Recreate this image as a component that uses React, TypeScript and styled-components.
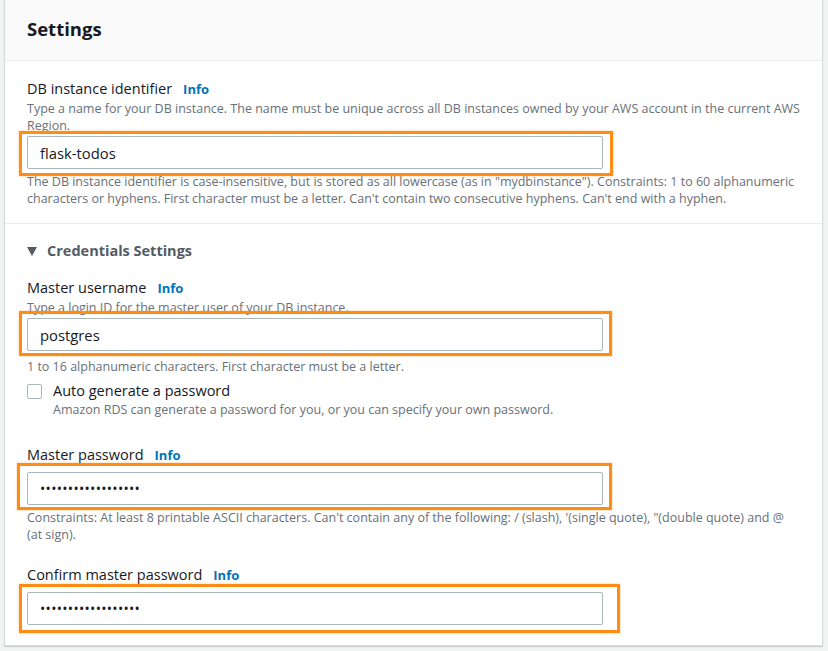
import React from "react";
import styled, { createGlobalStyle } from "styled-components";

const Global = createGlobalStyle`
  html, body { margin: 0; padding: 0; background: #f2f3f3; }
  body { font-family: "Open Sans", Roboto, Arial, sans-serif; color: #16191f; }
  * { box-sizing: border-box; }
`;

const Page = styled.div`
  width: 828px;
  height: 651px;
  overflow: hidden;
  padding: 0 5px 0 4px;
`;

const Card = styled.section`
  margin-top: -3px;
  background: #fff;
  border: 1px solid #d5dbdb;
  box-shadow: 0 1px 1px rgba(0, 22, 40, 0.15);
`;

const Header = styled.header`
  height: 63px;
  padding: 15px 22px 0;
  background: #fafafa;
  border-bottom: 1px solid #eaeded;
`;

const Title = styled.h2`
  margin: 0;
  padding-top: 3px;
  font-size: 18.5px;
  line-height: 26px;
  font-weight: 700;
  color: #16191f;
`;

const Section = styled.div<{ $top: number; $bottom: number; $divider?: boolean }>`
  padding: ${(p) => p.$top}px 22px ${(p) => p.$bottom}px;
  border-bottom: ${(p) => (p.$divider ? "1px solid #eaeded" : "none")};
`;

const Field = styled.div<{ $gap: number }>`
  margin-top: ${(p) => p.$gap}px;
`;

const Label = styled.div`
  display: flex;
  align-items: baseline;
  font-size: 14.5px;
  line-height: 21px;
  color: #16191f;
`;

const Info = styled.span`
  margin-left: 11px;
  font-size: 13px;
  font-weight: 700;
  color: #0073bb;
`;

const Desc = styled.div<{ $mt?: number }>`
  margin-top: ${(p) => p.$mt ?? 0}px;
  font-size: 12.5px;
  line-height: 17px;
  color: #687078;
`;

const InputWrap = styled.div<{ $mt: number }>`
  position: relative;
  width: 576px;
  margin-top: ${(p) => p.$mt}px;
`;

const Input = styled.input<{ $secret?: boolean }>`
  display: block;
  width: 100%;
  height: 33px;
  padding: 0 12px;
  border: 1px solid #aab7b8;
  border-radius: 2px;
  background: #fff;
  font-family: "Open Sans", Roboto, Arial, sans-serif;
  font-size: ${(p) => (p.$secret ? "14px" : "14.8px")};
  letter-spacing: ${(p) => (p.$secret ? "0.3px" : "0")};
  color: #16191f;
  outline: none;
`;

const Highlight = styled.div<{ $l: number; $t: number; $r: number; $b: number }>`
  position: absolute;
  left: ${(p) => -p.$l}px;
  top: ${(p) => -p.$t}px;
  right: ${(p) => -p.$r}px;
  bottom: ${(p) => -p.$b}px;
  border: 3px solid #ff8c14;
  box-shadow: 0 0 2px rgba(255, 140, 20, 0.5);
  pointer-events: none;
`;

const Expander = styled.div`
  display: flex;
  align-items: center;
  gap: 10px;
  font-size: 14.5px;
  line-height: 22px;
  font-weight: 700;
  color: #545b64;
`;

const Caret = styled.span`
  width: 0;
  height: 0;
  border-left: 5.5px solid transparent;
  border-right: 5.5px solid transparent;
  border-top: 9px solid #545b64;
`;

const CheckRow = styled.div`
  display: flex;
  align-items: flex-start;
  margin-top: 5px;
`;

const Box = styled.span`
  flex: none;
  width: 15px;
  height: 15px;
  margin-top: 4px;
  border: 1px solid #aab7b8;
  border-radius: 2px;
  background: #fff;
`;

const CheckText = styled.div`
  margin-left: 11px;
`;

type FieldProps = {
  label: string;
  desc?: React.ReactNode;
  value: string;
  password?: boolean;
  inputMt: number;
  hl: [number, number, number, number];
};

function FormField({ label, desc, value, password, inputMt, hl }: FieldProps) {
  return (
    <>
      <Label>
        {label}
        <Info>Info</Info>
      </Label>
      {desc && <Desc>{desc}</Desc>}
      <InputWrap $mt={inputMt}>
        <Input
          type={password ? "password" : "text"}
          $secret={password}
          defaultValue={value}
          readOnly
        />
        <Highlight $l={hl[0]} $t={hl[1]} $r={hl[2]} $b={hl[3]} />
      </InputWrap>
    </>
  );
}

export default function App() {
  return (
    <Page>
      <Global />
      <Card>
        <Header>
          <Title>Settings</Title>
        </Header>
        <Section $top={17} $bottom={16} $divider>
          <FormField
            label="DB instance identifier"
            desc="Type a name for your DB instance. The name must be unique across all DB instances owned by your AWS account in the current AWS Region."
            value="flask-todos"
            inputMt={2}
            hl={[8, 5, 10, 7]}
          />
          <Desc $mt={4}>
            The DB instance identifier is case-insensitive, but is stored as all lowercase (as in
            "mydbinstance"). Constraints: 1 to 60 alphanumeric characters or hyphens. First
            character must be a letter. Can't contain two consecutive hyphens. Can't end with a
            hyphen.
          </Desc>
        </Section>
        <Section $top={16} $bottom={20}>
          <Expander>
            <Caret />
            Credentials Settings
          </Expander>
          <Field $gap={15}>
            <FormField
              label="Master username"
              desc="Type a login ID for the master user of your DB instance."
              value="postgres"
              inputMt={2}
              hl={[8, 7, 9, 5]}
            />
            <Desc $mt={7}>1 to 16 alphanumeric characters. First character must be a letter.</Desc>
            <CheckRow>
              <Box />
              <CheckText>
                <Label>Auto generate a password</Label>
                <Desc>Amazon RDS can generate a password for you, or you can specify your own password.</Desc>
              </CheckText>
            </CheckRow>
          </Field>
          <Field $gap={26}>
            <FormField
              label="Master password"
              value="aaaaaaaaaaaaaaaaaa"
              password
              inputMt={6}
              hl={[10, 9, 9, 5]}
            />
            <Desc $mt={4}>
              Constraints: At least 8 printable ASCII characters. Can't contain any of the following:
              / (slash), '(single quote), "(double quote) and @ (at sign).
            </Desc>
          </Field>
          <Field $gap={21}>
            <FormField
              label="Confirm master password"
              value="aaaaaaaaaaaaaaaaaa"
              password
              inputMt={6}
              hl={[8, 8, 17, 8]}
            />
          </Field>
        </Section>
      </Card>
    </Page>
  );
}
